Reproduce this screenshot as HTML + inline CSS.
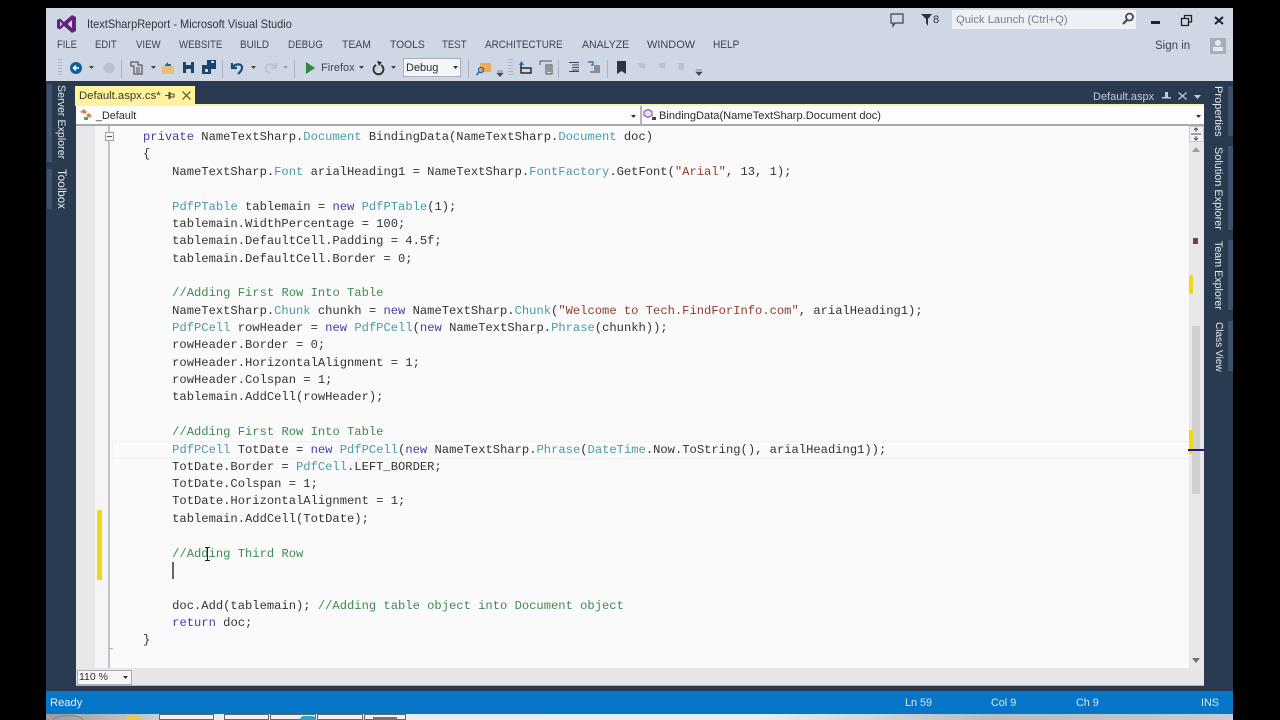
<!DOCTYPE html>
<html><head><meta charset="utf-8"><style>
html,body{margin:0;padding:0;background:#000;width:1280px;height:720px;overflow:hidden}
body{position:relative;font-family:"Liberation Sans",sans-serif;color:#2b2b33}
.a{position:absolute}
.m{position:absolute;top:38px;font-size:11.2px;line-height:14px;color:#3d4350;white-space:nowrap;transform-origin:left center}
.l{position:absolute;left:0;font:12.15px/17px "Liberation Mono",monospace;color:#333;white-space:pre}
.k{color:#3f3fa6}.t{color:#4a9aaa}.c{color:#3f8a50}.s{color:#8f3c2e}
.v{position:absolute;writing-mode:vertical-rl;font-size:10.8px;line-height:14px;color:#e3e8ef;white-space:nowrap}
.b{position:absolute;background:#3e5270;width:7px}
.sep{position:absolute;top:60px;width:1px;height:18px;background:#aab2c0}
.st{position:absolute;top:696px;font-size:10.8px;line-height:14px;color:#d8e8f6}
svg{position:absolute;overflow:visible}
</style></head><body>
<div class="a" style="left:46px;top:8px;width:1187px;height:706px;background:#d0d7e4"></div>
<div class="a" style="left:46px;top:81px;width:1187px;height:610px;background:#2a3a50"></div>
<div class="a" style="left:46px;top:691px;width:1187px;height:23px;background:#0776c6"></div>
<div class="a" style="left:46px;top:714px;width:1187px;height:6px;background:linear-gradient(90deg,#9a9a9a,#e8edf2 15%,#e9edf2 60%,#b8bcc0 80%,#c8ccd0)"></div>

<svg style="left:57px;top:15px" width="20" height="18" viewBox="0 0 20 18"><path d="M0 5l3-1.5 4 3.500L15 0l4 2v14l-4 2-8-7-4 3.500L0 13zM3 6.500v5L5.500 9zM15 5l-4.500 4 4.500 4z" fill="#68217a" fill-rule="evenodd"/></svg>
<div class="a" style="left:87px;top:17px;font-size:11.6px;line-height:15px;color:#30343c;white-space:nowrap;transform:scaleX(.95);transform-origin:left center">ItextSharpReport - Microsoft Visual Studio</div>

<svg style="left:890px;top:13px" width="14" height="15"><path d="M1 1h12v9H5l-2 3v-3H1z" fill="none" stroke="#3c4048" stroke-width="1.200"/></svg>
<svg style="left:921px;top:14px" width="12" height="12"><path d="M0 0h11L7 5v7L5 9V5z" fill="#2d3138"/></svg>
<div class="a" style="left:933px;top:13px;font-size:11px;line-height:14px;color:#30343c">8</div>
<div class="a" style="left:952px;top:10px;width:184px;height:19px;background:#eef0f5"></div>
<div class="a" style="left:956px;top:13px;font-size:11.2px;line-height:14px;color:#7a7e86;white-space:nowrap">Quick Launch (Ctrl+Q)</div>
<svg style="left:1121px;top:12px" width="14" height="14"><circle cx="8.500" cy="5" r="3.500" fill="none" stroke="#4a4a4a" stroke-width="1.800"/><path d="M6 8l-4 4" stroke="#4a4a4a" stroke-width="2.200"/></svg>
<div class="a" style="left:1151px;top:21px;width:9px;height:3px;background:#1e2228"></div>
<svg style="left:1181px;top:15px" width="11" height="11"><path d="M3.500 3V.500h7v6.500H8M.500 3.500h7v7h-7z" fill="none" stroke="#1e2228" stroke-width="1.300"/></svg>
<svg style="left:1214px;top:16px" width="10" height="9"><path d="M1 1l8 7M9 1L1 8" stroke="#1e2228" stroke-width="2"/></svg>

<div class="m" style="left:57px;transform:scaleX(.84)">FILE</div><div class="m" style="left:95px;transform:scaleX(.85)">EDIT</div><div class="m" style="left:136px;transform:scaleX(.86)">VIEW</div><div class="m" style="left:179px;transform:scaleX(.86)">WEBSITE</div><div class="m" style="left:240px;transform:scaleX(.88)">BUILD</div><div class="m" style="left:288px;transform:scaleX(.875)">DEBUG</div><div class="m" style="left:342px;transform:scaleX(.93)">TEAM</div><div class="m" style="left:390px;transform:scaleX(.92)">TOOLS</div><div class="m" style="left:442px;transform:scaleX(.86)">TEST</div><div class="m" style="left:485px;transform:scaleX(.886)">ARCHITECTURE</div><div class="m" style="left:582px;transform:scaleX(.94)">ANALYZE</div><div class="m" style="left:647px;transform:scaleX(.98)">WINDOW</div><div class="m" style="left:713px;transform:scaleX(.9)">HELP</div>
<div class="a" style="left:1155px;top:39px;font-size:11.5px;line-height:14px;color:#3d4350">Sign in</div>
<div class="a" style="left:1210px;top:38px;width:16px;height:16px;background:#a8aeb8"></div>
<svg style="left:1210px;top:38px" width="16" height="16"><circle cx="8" cy="5" r="3" fill="#e6e8ec"/><path d="M3 9h10v4H3z" fill="#e6e8ec"/></svg>

<!-- toolbar -->
<div class="a" style="left:58px;top:59px;width:4px;height:18px;background:repeating-linear-gradient(#aeb4c0 0 1px,transparent 1px 3px)"></div>
<svg style="left:70px;top:62px" width="12" height="12"><circle cx="6" cy="6" r="6" fill="#0e5f9e"/><path d="M9 6H4M6 3.500L3.500 6 6 8.500" stroke="#fff" stroke-width="1.500" fill="none"/></svg>
<svg style="left:89px;top:66px" width="5" height="3"><path d="M0 0h5L2.500 3z" fill="#444"/></svg>
<svg style="left:103px;top:62px" width="12" height="12"><circle cx="6" cy="6" r="5.500" fill="#bcc2cc"/></svg>
<div class="sep" style="left:121px"></div>
<svg style="left:130px;top:61px" width="14" height="14"><path d="M1 1h7v3h4v9H4V5H1z" fill="none" stroke="#555" stroke-width="1.200"/><path d="M6 7h4M6 9h4M6 11h4" stroke="#555"/></svg>
<svg style="left:151px;top:66px" width="5" height="3"><path d="M0 0h5L2.500 3z" fill="#444"/></svg>
<svg style="left:161px;top:60px" width="14" height="15"><path d="M1 6h12v8H1z" fill="#e8c078"/><path d="M4 5l3-3v2h3v2H4z" fill="#1a6aa8"/></svg>
<svg style="left:183px;top:62px" width="11" height="11"><path d="M0 0h11v11H0z" fill="#17456e"/><path d="M3 0h5v3H3z" fill="#cfd6e2"/><path d="M3 7h5v4H3z" fill="#cfd6e2"/></svg>
<svg style="left:202px;top:60px" width="14" height="14"><path d="M5 0h9v9H9v5H0V5h5z" fill="#17456e"/><path d="M3 9h3v3H3zM9 1h3v2H9z" fill="#cfd6e2"/></svg>
<div class="sep" style="left:222px"></div>
<svg style="left:230px;top:61px" width="14" height="14"><path d="M2 2v5h5M3 6c2-3 8-4 9 0 .6 3-2 5-4 7" fill="none" stroke="#17507e" stroke-width="2.200"/></svg>
<svg style="left:251px;top:66px" width="5" height="3"><path d="M0 0h5L2.500 3z" fill="#444"/></svg>
<svg style="left:264px;top:61px" width="14" height="14"><path d="M12 2v5H7M11 6C9 3 3 2 2 6c-.6 3 2 5 4 7" fill="none" stroke="#bcc2cc" stroke-width="2"/></svg>
<svg style="left:283px;top:66px" width="5" height="3"><path d="M0 0h5L2.500 3z" fill="#9aa0aa"/></svg>
<div class="sep" style="left:294px"></div>
<svg style="left:306px;top:62px" width="9" height="12"><path d="M0 0l9 6-9 6z" fill="#2f8a3c"/></svg>
<div class="a" style="left:321px;top:61px;font-size:11px;line-height:14px;color:#3d4350">Firefox</div>
<svg style="left:359px;top:66px" width="5" height="3"><path d="M0 0h5L2.500 3z" fill="#444"/></svg>
<svg style="left:372px;top:61px" width="13" height="14"><path d="M9 4a5 5 0 1 1-5 0" fill="none" stroke="#2c2c2c" stroke-width="1.800"/><path d="M5 0l5 1-3 4z" fill="#2c2c2c"/></svg>
<svg style="left:391px;top:66px" width="5" height="3"><path d="M0 0h5L2.500 3z" fill="#444"/></svg>
<div class="a" style="left:403px;top:58px;width:58px;height:19px;background:#f4f5f8;border:1px solid #a8aeba;box-sizing:border-box"></div>
<div class="a" style="left:406px;top:61px;font-size:11px;line-height:14px;color:#2c2c2c">Debug</div>
<svg style="left:453px;top:66px" width="5" height="3"><path d="M0 0h5L2.500 3z" fill="#333"/></svg>
<div class="sep" style="left:468px"></div>
<svg style="left:476px;top:61px" width="15" height="15"><path d="M4 2h11v9H4z" fill="#eba95c"/><circle cx="5" cy="9" r="2.500" fill="none" stroke="#1a6aa8" stroke-width="1.300"/><path d="M3 11l-2.500 3" stroke="#1a6aa8" stroke-width="1.500"/></svg>
<svg style="left:497px;top:71px" width="7" height="6"><path d="M0 0h6M0 2h6L3 5.500z" fill="#444" stroke="#444" stroke-width=".6"/></svg>
<div class="a" style="left:508px;top:59px;width:5px;height:18px;background:repeating-linear-gradient(#aeb4c0 0 1px,transparent 1px 3px)"></div>
<svg style="left:519px;top:61px" width="13" height="13"><path d="M2 4v8h10V7H2" fill="none" stroke="#2c2c2c" stroke-width="1.500"/><path d="M2.500 0L5 4H0z" fill="#1a6aa8"/></svg>
<svg style="left:539px;top:60px" width="14" height="15"><path d="M1 5V1h12M7 5h6v9H7zM8 7h4M8 9h4M8 11h4" fill="none" stroke="#555"/></svg>
<div class="sep" style="left:558px"></div>
<svg style="left:569px;top:62px" width="11" height="10"><path d="M0 .500h10M3 3h7M3 5.500h7M3 8h7M0 9.500h10" stroke="#444"/></svg>
<svg style="left:588px;top:61px" width="12" height="12"><path d="M0 1h5v3H3" fill="none" stroke="#1a6aa8" stroke-width="1.200"/><path d="M6 5h6M6 7h6M6 9h6M2 11h10" stroke="#444"/></svg>
<div class="sep" style="left:607px"></div>
<svg style="left:616px;top:61px" width="11" height="13"><path d="M1 0h9v13L5.500 10 1 13z" fill="#30343c"/></svg>
<svg style="left:636px;top:61px" width="60" height="13"><path d="M2 2h7v6l-2-1H4zM22 2h7v6l-2-1h-3zM42 2h6v8l-2-1h-3z" fill="#bcc3cf"/></svg>
<svg style="left:696px;top:70px" width="7" height="6"><path d="M0 0h6M0 2h6L3 5.500z" fill="#444" stroke="#444" stroke-width=".6"/></svg>

<!-- tabs -->
<div class="a" style="left:75px;top:86px;width:120px;height:20px;background:#fff29d"></div>
<div class="a" style="left:79px;top:89px;font-size:11.3px;line-height:14px;color:#3a3a30;white-space:nowrap">Default.aspx.cs*</div>
<svg style="left:165px;top:91px" width="9" height="9"><path d="M0 4.500h4M4 1.500h1v6H4zM5 3h4v3H5z" fill="none" stroke="#4a4a40"/></svg>
<svg style="left:182px;top:91px" width="9" height="9"><path d="M.5.500l8 8M8.500.500l-8 8" stroke="#4a4a40" stroke-width="1.200"/></svg>
<div class="a" style="left:1093px;top:90px;font-size:11px;line-height:14px;color:#c4ccd8;white-space:nowrap">Default.aspx</div>
<svg style="left:1162px;top:92px" width="9" height="8"><path d="M3 0h3v5H3zM0 5h9v1.500H0z" fill="#c4ccd8"/></svg>
<svg style="left:1178px;top:92px" width="9" height="8"><path d="M.5.500l8 7M8.500.500l-8 7" stroke="#c4ccd8" stroke-width="1.200"/></svg>
<svg style="left:1194px;top:95px" width="7" height="4"><path d="M0 0h7L3.500 4z" fill="#c4ccd8"/></svg>

<!-- nav bar -->
<div class="a" style="left:75px;top:104px;width:1129px;height:2px;background:#fff29d"></div>
<div class="a" style="left:76px;top:106px;width:1128px;height:20px;background:#fdfdfd"></div>
<div class="a" style="left:76px;top:124px;width:1128px;height:2px;background:#a8aab0"></div>
<div class="a" style="left:640px;top:106px;width:2px;height:19px;background:#b4b6bc"></div>
<svg style="left:80px;top:109px" width="13" height="12"><path d="M0 3l4-3 3 3-2 2zM6 6l3-2 3 3-3 2z" fill="#c98a4a"/><path d="M4 8h4v3H4z" fill="#5aa05a"/></svg>
<div class="a" style="left:96px;top:109px;font-size:10.8px;line-height:14px;color:#2c2c2c">_Default</div>
<svg style="left:631px;top:115px" width="5" height="3"><path d="M0 0h5L2.500 3z" fill="#333"/></svg>
<svg style="left:644px;top:109px" width="12" height="12"><path d="M4 .5l4 2v4l-4 2-4-2v-4z" fill="#e8e0f0" stroke="#6a4a9a"/><path d="M8 8h4v3H8z" fill="#444"/></svg>
<div class="a" style="left:659px;top:109px;font-size:11.1px;line-height:14px;color:#2c2c2c;white-space:nowrap">BindingData(NameTextSharp.Document doc)</div>
<svg style="left:1196px;top:115px" width="5" height="3"><path d="M0 0h5L2.500 3z" fill="#333"/></svg>

<!-- editor -->
<div class="a" style="left:76px;top:126px;width:1128px;height:560px;background:#fbfafa"></div>
<div class="a" style="left:76px;top:126px;width:19px;height:542px;background:#e8e8ea"></div>
<div class="a" style="left:95px;top:126px;width:13px;height:542px;background:#f6f5f6"></div>
<div class="a" style="left:108px;top:126px;width:2px;height:542px;background:#c2c3c6"></div>
<div class="a" style="left:105px;top:132px;width:9px;height:9px;background:#f4f4f4;border:1px solid #a0a0a0;box-sizing:border-box"></div>
<div class="a" style="left:107px;top:136px;width:5px;height:1px;background:#555"></div>
<div class="a" style="left:109px;top:648px;width:4px;height:1px;background:#b0b0b0"></div>
<div class="a" style="left:97px;top:510px;width:5px;height:70px;background:#f0d818"></div>
<div class="a" style="left:112px;top:441px;width:1076px;height:16px;border:1px solid #f2f1f2;border-right:0;box-sizing:content-box"></div>
<div class="a" style="left:76px;top:668px;width:1128px;height:18px;background:#e6e6e9"></div>
<div class="a" style="left:76px;top:685px;width:1128px;height:1px;background:#b0b2b8"></div>
<div class="a" style="left:77px;top:670px;width:55px;height:15px;background:#f6f6f8;border:1px solid #a8aab0;box-sizing:border-box"></div>
<div class="a" style="left:79px;top:671px;font-size:10.5px;line-height:13px;color:#2c2c2c">110 %</div>
<svg style="left:123px;top:676px" width="5" height="3"><path d="M0 0h5L2.500 3z" fill="#333"/></svg>

<!-- scrollbar -->
<div class="a" style="left:1189px;top:126px;width:15px;height:542px;background:#e8e8ea"></div>
<div class="a" style="left:1189px;top:126px;width:15px;height:16px;background:#f0f0f2;border:1px solid #c8cad0;box-sizing:border-box"></div>
<svg style="left:1191px;top:128px" width="10" height="12"><path d="M0 6h10M5 0v4M3 2l2-2 2 2M5 12V8M3 10l2 2 2-2" stroke="#4a5058" fill="none"/></svg>
<svg style="left:1192px;top:147px" width="8" height="5"><path d="M0 5l4-5 4 5z" fill="#9a9ca2"/></svg>
<svg style="left:1192px;top:658px" width="8" height="5"><path d="M0 0l4 5 4-5z" fill="#6e7076"/></svg>
<div class="a" style="left:1192px;top:326px;width:8px;height:168px;background:#d0d0d2"></div>
<div class="a" style="left:1193px;top:238px;width:5px;height:6px;background:#7a3a50"></div>
<div class="a" style="left:1189px;top:275px;width:4px;height:19px;background:#f2d818"></div>
<div class="a" style="left:1189px;top:430px;width:4px;height:24px;background:#f2d818"></div>
<div class="a" style="left:1188px;top:449px;width:16px;height:2px;background:#1a1a80"></div>

<!-- code -->
<div class="a" style="left:143px;top:129px;width:1040px;height:530px">
<div class="l" style="top:0"><span class="k">private</span> NameTextSharp.<span class="t">Document</span> BindingData(NameTextSharp.<span class="t">Document</span> doc)</div>
<div class="l" style="top:17px">{</div>
<div class="l" style="top:35px">    NameTextSharp.<span class="t">Font</span> arialHeading1 = NameTextSharp.<span class="t">FontFactory</span>.GetFont(<span class="s">"Arial"</span>, 13, 1);</div>
<div class="l" style="top:70px">    <span class="t">PdfPTable</span> tablemain = <span class="k">new</span> <span class="t">PdfPTable</span>(1);</div>
<div class="l" style="top:87px">    tablemain.WidthPercentage = 100;</div>
<div class="l" style="top:104px">    tablemain.DefaultCell.Padding = 4.5f;</div>
<div class="l" style="top:122px">    tablemain.DefaultCell.Border = 0;</div>
<div class="l" style="top:156px">    <span class="c">//Adding First Row Into Table</span></div>
<div class="l" style="top:174px">    NameTextSharp.<span class="t">Chunk</span> chunkh = <span class="k">new</span> NameTextSharp.<span class="t">Chunk</span>(<span class="s">"Welcome to Tech.FindForInfo.com"</span>, arialHeading1);</div>
<div class="l" style="top:191px">    <span class="t">PdfPCell</span> rowHeader = <span class="k">new</span> <span class="t">PdfPCell</span>(<span class="k">new</span> NameTextSharp.<span class="t">Phrase</span>(chunkh));</div>
<div class="l" style="top:208px">    rowHeader.Border = 0;</div>
<div class="l" style="top:226px">    rowHeader.HorizontalAlignment = 1;</div>
<div class="l" style="top:243px">    rowHeader.Colspan = 1;</div>
<div class="l" style="top:260px">    tablemain.AddCell(rowHeader);</div>
<div class="l" style="top:295px">    <span class="c">//Adding First Row Into Table</span></div>
<div class="l" style="top:313px">    <span class="t">PdfPCell</span> TotDate = <span class="k">new</span> <span class="t">PdfPCell</span>(<span class="k">new</span> NameTextSharp.<span class="t">Phrase</span>(<span class="t">DateTime</span>.Now.ToString(), arialHeading1));</div>
<div class="l" style="top:330px">    TotDate.Border = <span class="t">PdfCell</span>.LEFT_BORDER;</div>
<div class="l" style="top:347px">    TotDate.Colspan = 1;</div>
<div class="l" style="top:364px">    TotDate.HorizontalAlignment = 1;</div>
<div class="l" style="top:382px">    tablemain.AddCell(TotDate);</div>
<div class="l" style="top:417px">    <span class="c">//Adding Third Row</span></div>
<div class="l" style="top:469px">    doc.Add(tablemain); <span class="c">//Adding table object into Document object</span></div>
<div class="l" style="top:486px">    <span class="k">return</span> doc;</div>
<div class="l" style="top:503px">}</div>
</div>
<div class="a" style="left:172px;top:562px;width:2px;height:17px;background:#666"></div>
<svg style="left:204px;top:547px" width="7" height="14"><path d="M1 .5h5M3.500.5v13M1 13.500h5" stroke="#222" fill="none"/></svg>

<!-- side tabs -->
<div class="b" style="left:47px;top:84px;height:78px;width:5px"></div>
<div class="b" style="left:47px;top:169px;height:40px;width:5px"></div>
<div class="v" style="left:54px;top:85px;font-size:10.7px">Server Explorer</div>
<div class="v" style="left:54px;top:169px;font-size:11.6px">Toolbox</div>
<div class="b" style="left:1228px;top:86px;height:50px;width:5px"></div>
<div class="b" style="left:1228px;top:146px;height:84px;width:5px"></div>
<div class="b" style="left:1228px;top:240px;height:70px;width:5px"></div>
<div class="b" style="left:1228px;top:321px;height:50px;width:5px"></div>
<div class="v" style="left:1211px;top:86px;font-size:11.1px">Properties</div>
<div class="v" style="left:1211px;top:147px;font-size:10.9px">Solution Explorer</div>
<div class="v" style="left:1211px;top:241px;font-size:10.7px">Team Explorer</div>
<div class="v" style="left:1211px;top:322px;font-size:10.1px">Class View</div>

<!-- status -->
<div class="a" style="left:50px;top:696px;font-size:11.2px;line-height:14px;color:#e4f0fa">Ready</div>
<div class="st" style="left:905px">Ln 59</div>
<div class="st" style="left:991px">Col 9</div>
<div class="st" style="left:1076px">Ch 9</div>
<div class="st" style="left:1201px">INS</div>

<!-- taskbar fragments -->
<div class="a" style="left:53px;top:715px;width:30px;height:10px;border-radius:50%;border:1px solid #7a8088;box-sizing:border-box"></div>
<div class="a" style="left:125px;top:715px;width:16px;height:6px;background:#e8c850;border-radius:8px 8px 0 0"></div>
<div class="a" style="left:159px;top:714px;width:55px;height:6px;background:#f0f0f0;border:1px solid #666;box-sizing:border-box"></div>
<div class="a" style="left:224px;top:714px;width:45px;height:6px;background:#f0f0f0;border:1px solid #666;box-sizing:border-box"></div>
<div class="a" style="left:270px;top:714px;width:46px;height:6px;background:#f0f0f0;border:1px solid #666;box-sizing:border-box"></div>
<div class="a" style="left:317px;top:714px;width:46px;height:6px;background:#f0f0f0;border:1px solid #666;box-sizing:border-box"></div>
<div class="a" style="left:364px;top:714px;width:42px;height:6px;background:#f0f0f0;border:1px solid #666;box-sizing:border-box"></div>
<div class="a" style="left:300px;top:716px;width:16px;height:4px;background:#30a0c8;border-radius:8px 8px 0 0"></div>
<div class="a" style="left:373px;top:717px;width:24px;height:3px;background:#707078"></div>
</body></html>
